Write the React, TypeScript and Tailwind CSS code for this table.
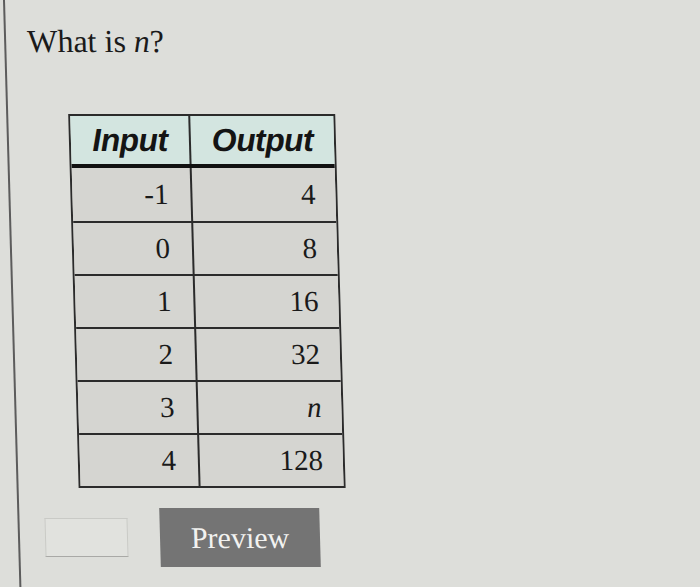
import React from 'react';

const rows: { input: string; output: string; italic?: boolean }[] = [
    { input: '-1', output: '4' },
    { input: '0', output: '8' },
    { input: '1', output: '16' },
    { input: '2', output: '32' },
    { input: '3', output: 'n', italic: true },
    { input: '4', output: '128' },
];

export default function App() {
    return (
        <div className="w-[700px] h-[587px] overflow-hidden bg-[#dddeda] font-['Liberation_Serif',serif] text-[#1a1a1a]">
            <div className="h-[587px] ml-[3px] border-l-2 border-[#5c5c5c] pl-[21px] pt-[23px] origin-top-left skew-x-[1.6deg]">
                {/* Question */}
                <h1 className="text-[32px] leading-[36px] font-normal">
                    What is <span className="italic">n</span>?
                </h1>

                {/* Table */}
                <div className="mt-[55px] ml-[39px] w-[267px] border-2 border-[#2b2b2b]">
                    <div className="grid grid-cols-[120px_1fr] h-[52px] bg-[#d3e5e0] border-b-4 border-[#111] font-['Liberation_Sans',Arial,sans-serif] font-bold italic text-[32px] tracking-[-0.6px] text-[#141414]">
                        <div className="flex items-center justify-center border-r-2 border-[#2b2b2b]">Input</div>
                        <div className="flex items-center justify-center">Output</div>
                    </div>
                    {rows.map((row, i) => (
                        <div
                            key={i}
                            className={`grid grid-cols-[120px_1fr] h-[53px] bg-[#d5d5d1] text-[29px] ${i > 0 ? 'border-t-2 border-[#2b2b2b]' : ''}`}
                        >
                            <div className="flex items-center justify-end pr-[22px] border-r-2 border-[#2b2b2b]">{row.input}</div>
                            <div className={`flex items-center justify-end pr-[20px] ${row.italic ? 'italic' : ''}`}>{row.output}</div>
                        </div>
                    ))}
                </div>

                {/* Answer + preview */}
                <div className="mt-[20px] ml-[4px] flex items-center gap-[32px]">
                    <div className="w-[83px] h-[39px] bg-[#e1e2de] border border-[#c9cac6] border-b-[#a9a9a6]" />
                    <button className="w-[160px] h-[59px] bg-[#747474] text-[#f2f2f0] text-[30px] leading-none">
                        Preview
                    </button>
                </div>
            </div>
        </div>
    );
}
